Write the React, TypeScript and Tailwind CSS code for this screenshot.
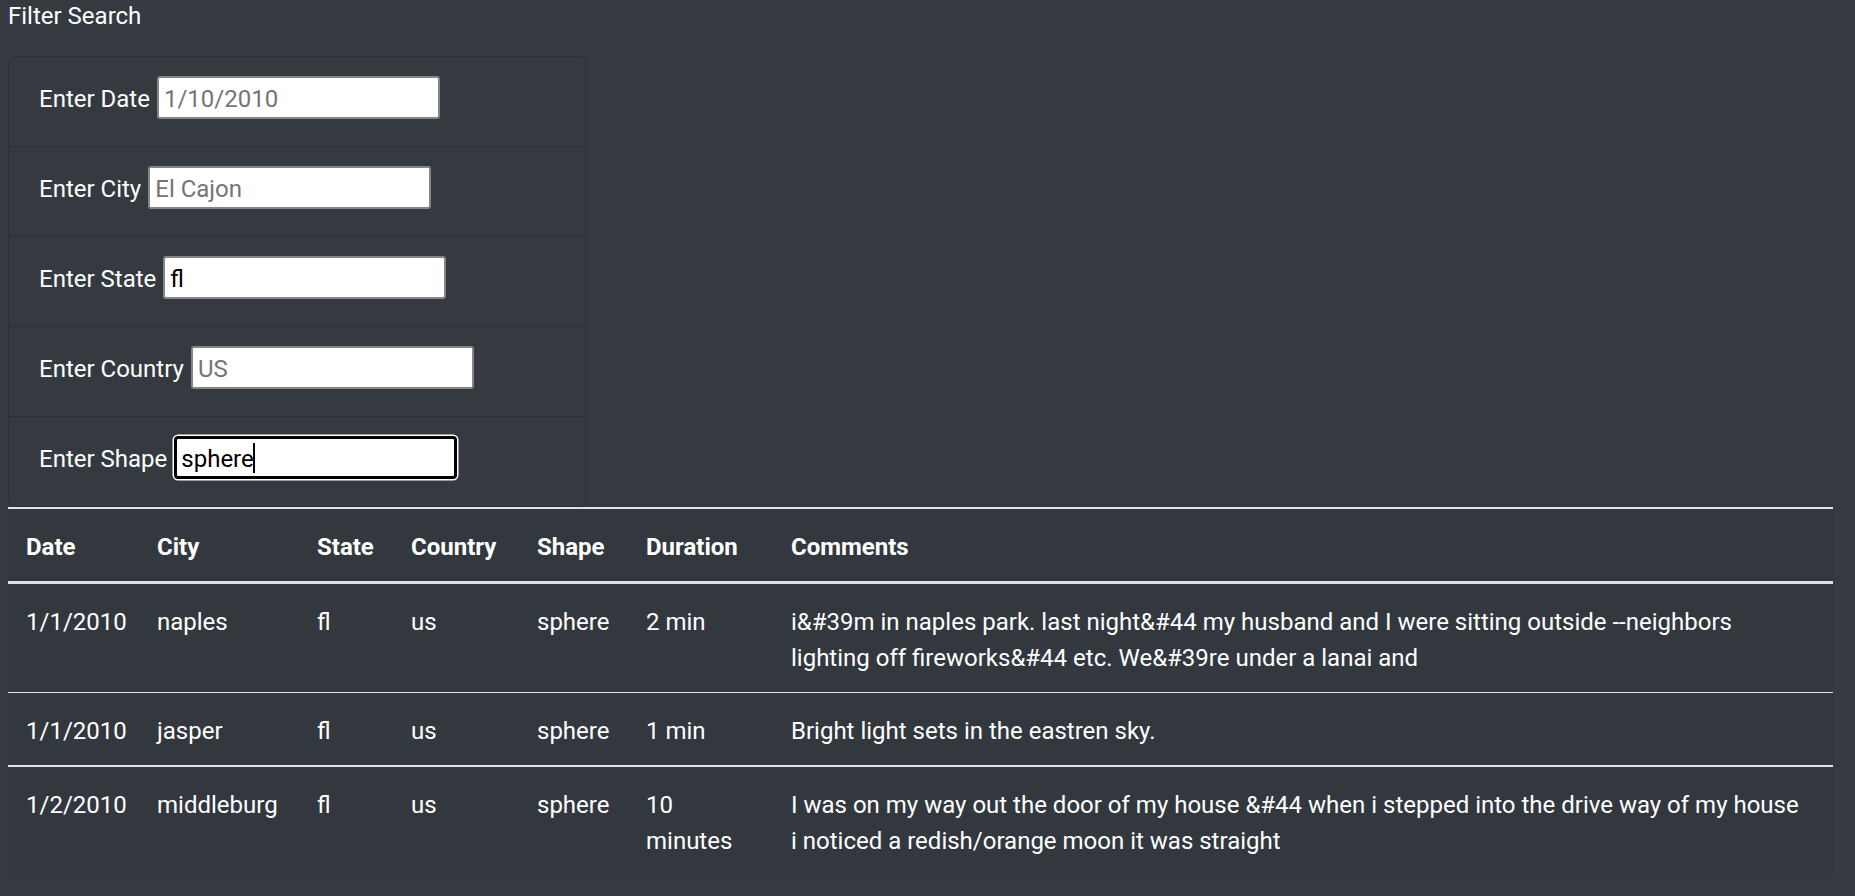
import React from 'react'

const FILTERS = [
  { label: 'Enter Date', placeholder: '1/10/2010' },
  { label: 'Enter City', placeholder: 'El Cajon' },
  { label: 'Enter State', placeholder: '', value: 'fl' },
  { label: 'Enter Country', placeholder: 'US' },
  { label: 'Enter Shape', placeholder: '', value: 'sphere', focused: true },
]

const SIGHTINGS = [
  {
    date: '1/1/2010', city: 'naples', state: 'fl', country: 'us', shape: 'sphere', duration: '2 min',
    comments: [
      'i&#39m in naples park. last night&#44 my husband and I were sitting outside --neighbors',
      'lighting off fireworks&#44 etc. We&#39re under a lanai and',
    ],
    border: 'border-b border-[#dee2e6]',
  },
  {
    date: '1/1/2010', city: 'jasper', state: 'fl', country: 'us', shape: 'sphere', duration: '1 min',
    comments: ['Bright light sets in the eastren sky.'],
    border: 'border-b-2 border-[#dee2e6]',
  },
  {
    date: '1/2/2010', city: 'middleburg', state: 'fl', country: 'us', shape: 'sphere', duration: '10 minutes',
    comments: [
      'I was on my way out the door of my house &#44 when i stepped into the drive way of my house',
      'i noticed a redish/orange moon it was straight',
    ],
    border: '',
  },
]

function FilterRow({ label, placeholder, value, focused, first }: {
  label: string; placeholder: string; value?: string; focused?: boolean; first: boolean
}) {
  return (
    <li className={`px-[30px] pt-[19px] ${first ? 'h-[89px]' : 'h-[90px] border-t border-[#2b3035]'}`}>
      <div className="flex items-baseline gap-[7px]">
        <label className="whitespace-nowrap">{label}</label>
        <span className="relative">
          <input
            type="text"
            placeholder={placeholder}
            defaultValue={value}
            className={
              focused
                ? 'block w-[283px] h-[43px] pt-[3px] bg-white text-black text-[24px] rounded-[4px] border-[3px] border-black pl-[4px] shadow-[0_0_0_1.5px_#fff] outline-none placeholder-[#757575]'
                : 'block w-[283px] h-[43px] pt-[3px] bg-white text-black text-[24px] rounded-[3px] border-2 border-[#858585] pl-[5px] outline-none placeholder-[#757575]'
            }
          />
          {focused && <span className="absolute left-[79px] top-[7px] h-[30px] w-[1.5px] bg-black" />}
        </span>
      </div>
    </li>
  )
}

export default function App() {
  return (
    <div
      className="min-h-screen bg-[#343a40] text-white text-[24px] leading-[36px] px-2"
      style={{ fontFamily: 'Roboto, "Liberation Sans", sans-serif' }}
    >
      <p className="leading-[30px] pt-[1px]">Filter Search</p>

      {/* filters */}
      <ul className="mt-[25px] w-[578px] border border-[#2b3035] rounded-[6px]">
        {FILTERS.map((f, i) => (
          <FilterRow key={f.label} {...f} first={i === 0} />
        ))}
      </ul>

      {/* results */}
      <table className="w-[1825px] table-fixed border-separate border-spacing-0 bg-[#32383e] text-left">
        <thead>
          <tr>
            {[
              ['Date', 'w-[131px]'],
              ['City', 'w-[160px]'],
              ['State', 'w-[94px]'],
              ['Country', 'w-[126px]'],
              ['Shape', 'w-[109px]'],
              ['Duration', 'w-[145px]'],
              ['Comments', ''],
            ].map(([h, w]) => (
              <th key={h} className={`${w} px-[18px] pt-[20px] pb-[16px] font-bold border-t-2 border-b-[3px] border-[#dee2e6]`}>
                {h}
              </th>
            ))}
          </tr>
        </thead>
        <tbody>
          {SIGHTINGS.map((s, i) => (
            <tr key={i}>
              <td className={`px-[18px] pt-[20px] pb-[16px] align-top whitespace-nowrap ${s.border}`}>{s.date}</td>
              <td className={`px-[18px] pt-[20px] pb-[16px] align-top ${s.border}`}>{s.city}</td>
              <td className={`px-[18px] pt-[20px] pb-[16px] align-top ${s.border}`}>{s.state}</td>
              <td className={`px-[18px] pt-[20px] pb-[16px] align-top ${s.border}`}>{s.country}</td>
              <td className={`px-[18px] pt-[20px] pb-[16px] align-top ${s.border}`}>{s.shape}</td>
              <td className={`px-[18px] pt-[20px] pb-[16px] align-top ${s.border}`}>{s.duration}</td>
              <td className={`px-[18px] pt-[20px] pb-[16px] align-top whitespace-nowrap ${s.border}`}>
                {s.comments.map((c, j) => (
                  <div key={j}>{c}</div>
                ))}
              </td>
            </tr>
          ))}
        </tbody>
      </table>
    </div>
  )
}
